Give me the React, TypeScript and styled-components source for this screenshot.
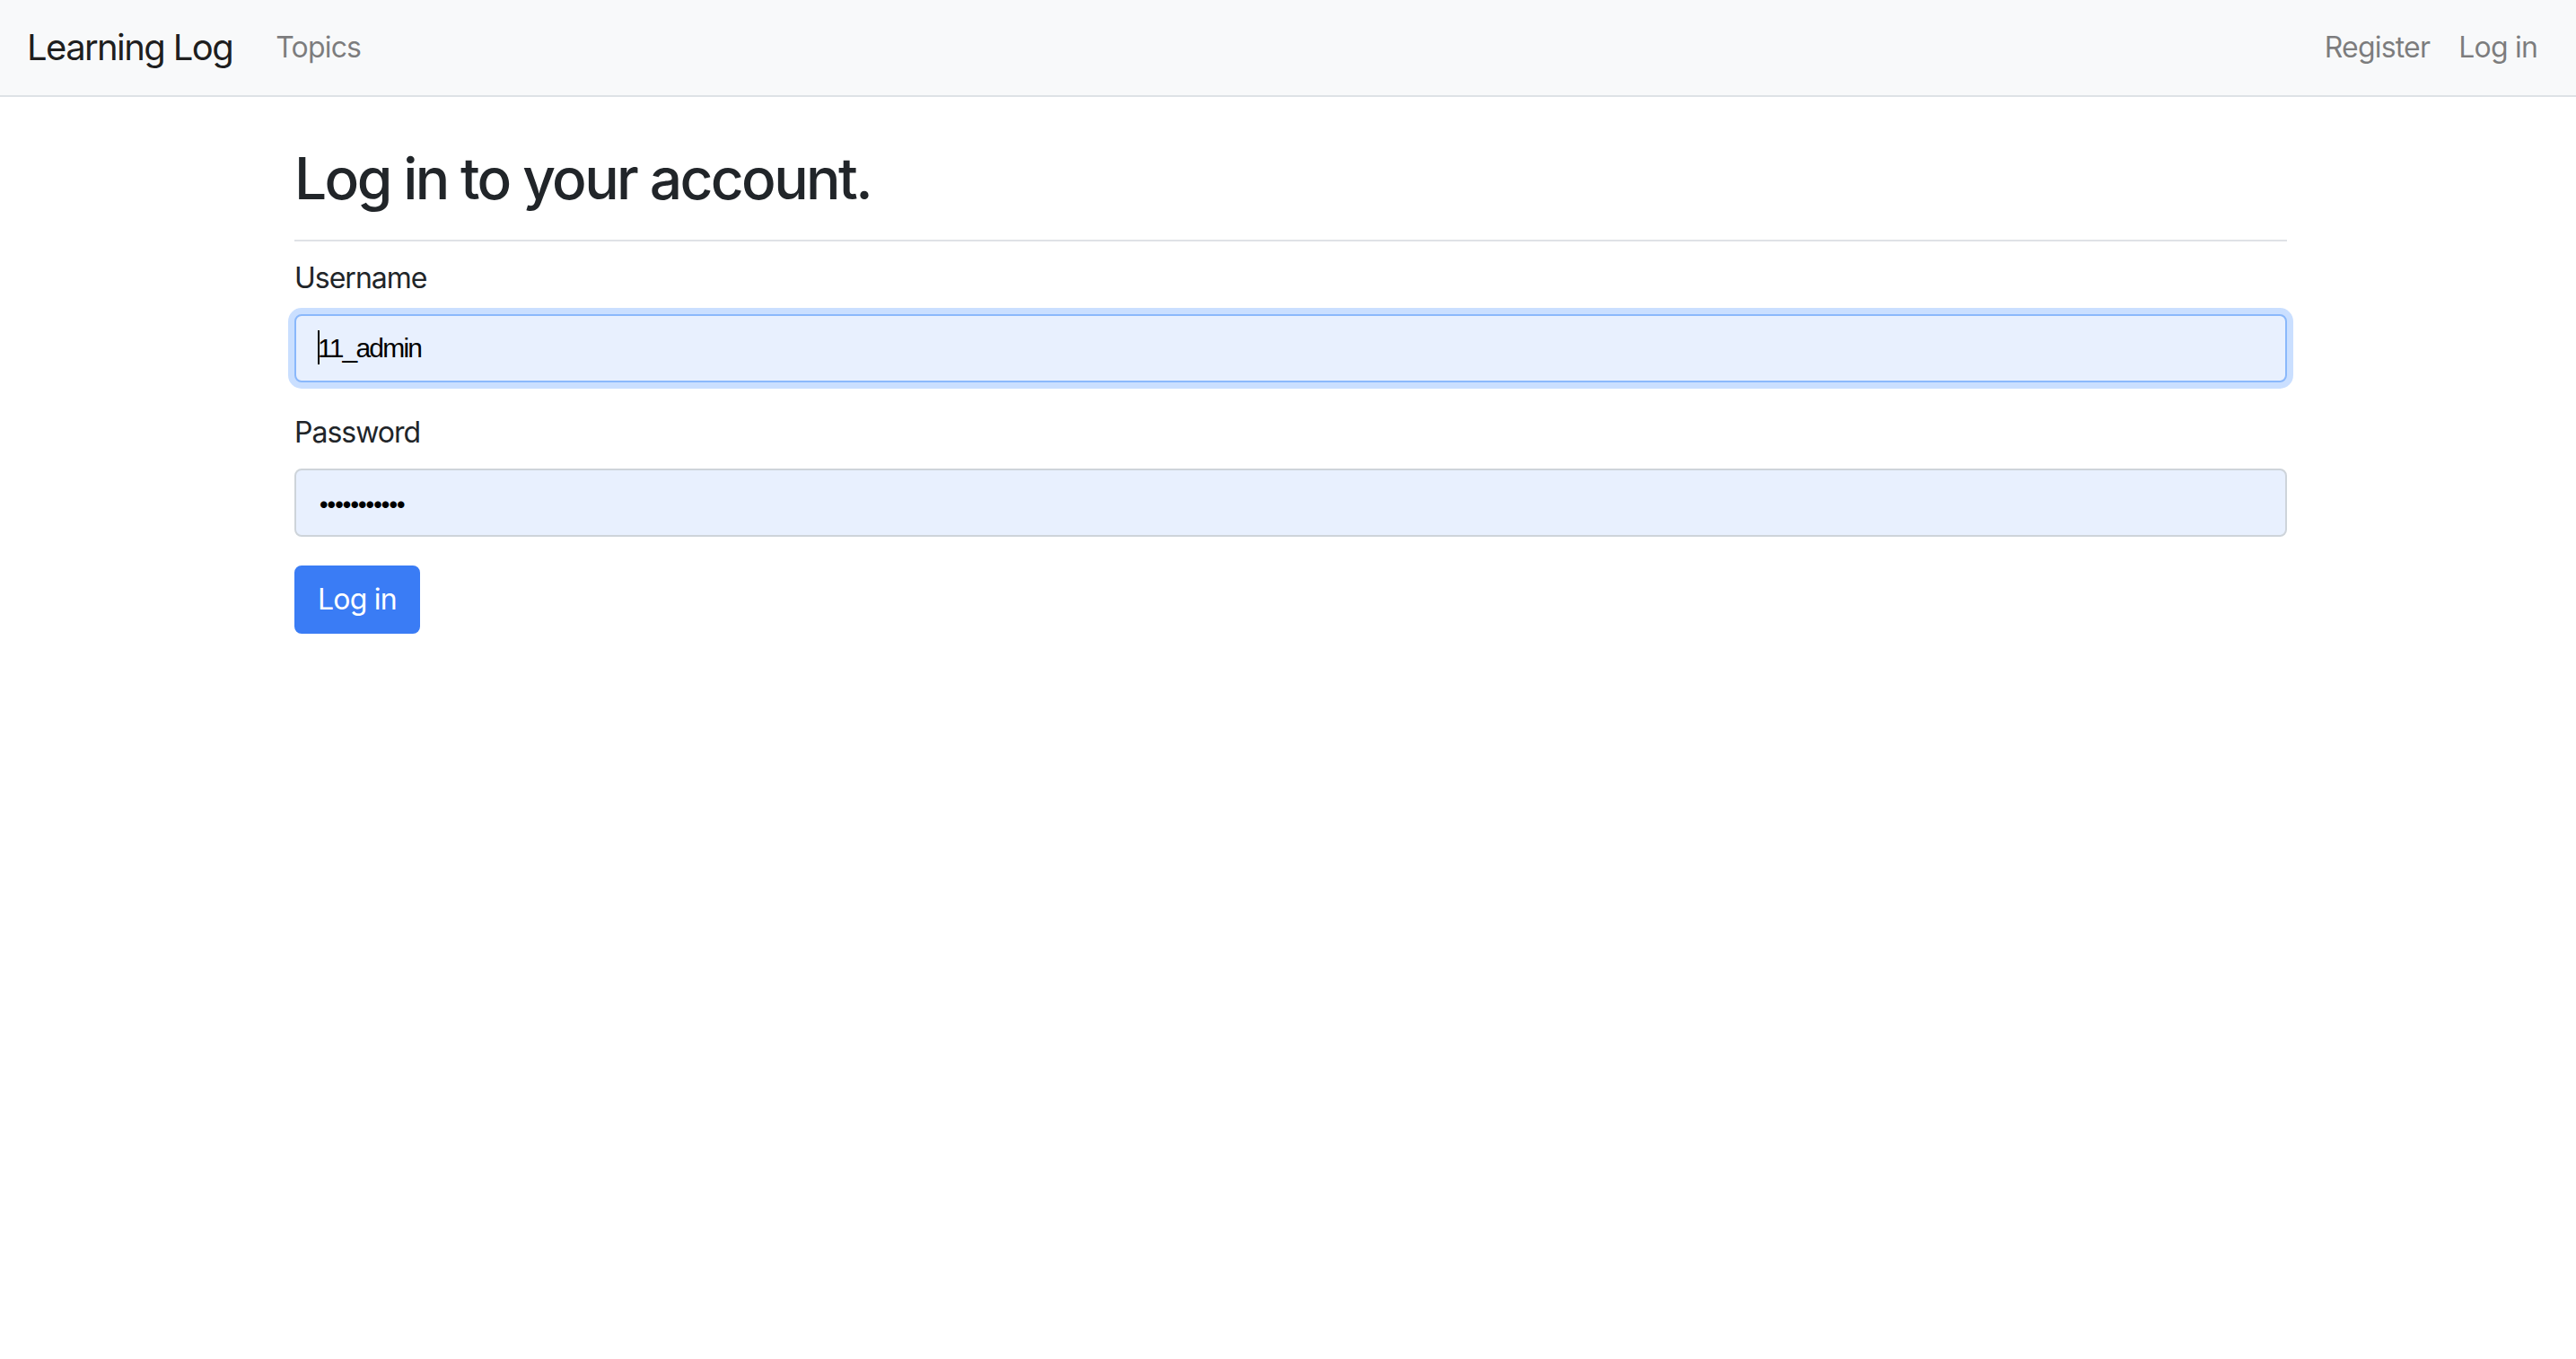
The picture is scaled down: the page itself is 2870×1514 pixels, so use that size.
import styled, { createGlobalStyle } from "styled-components";

const GlobalStyle = createGlobalStyle`
  html, body {
    margin: 0;
    padding: 0;
    background: #ffffff;
  }
  body {
    font-family: Inter, "Liberation Sans", sans-serif;
    color: #212529;
  }
  * {
    box-sizing: border-box;
  }
`;

const Navbar = styled.nav`
  display: flex;
  align-items: center;
  height: 108px;
  padding: 0 27px 0 30px;
  background: #f8f9fa;
  border-bottom: 2px solid #dee2e6;
`;

const Brand = styled.a`
  font-size: 40px;
  line-height: 60px;
  letter-spacing: -1.6px;
  color: rgba(0, 0, 0, 0.9);
  text-decoration: none;
  margin-right: 32px;
`;

const NavList = styled.ul<{ $right?: boolean }>`
  display: flex;
  list-style: none;
  margin: 0;
  margin-left: ${(p) => (p.$right ? "auto" : "0")};
  padding: 0;
`;

const NavLink = styled.a`
  display: block;
  padding: 0 16px;
  font-size: 32px;
  line-height: 48px;
  letter-spacing: -0.8px;
  color: rgba(0, 0, 0, 0.5);
  text-decoration: none;
`;

const Shell = styled.div`
  padding-left: 6px;
`;

const Container = styled.main`
  width: 2220px;
  margin: 0 auto;
`;

const Title = styled.h2`
  margin: 52px 0 30px;
  font-size: 64px;
  line-height: 77px;
  font-weight: 500;
  letter-spacing: -2.6px;
  color: #212529;
`;

const Divider = styled.hr`
  margin: 0 0 17px;
  border: 0;
  border-top: 2px solid #dfe2e6;
`;

const FormGroup = styled.div`
  margin-bottom: 32px;
`;

const Label = styled.label`
  display: block;
  margin-bottom: 16px;
  font-size: 32px;
  line-height: 48px;
  letter-spacing: -1px;
  color: #212529;
`;

const Field = styled.div`
  position: relative;
`;

const Caret = styled.span`
  position: absolute;
  left: 26px;
  top: 18px;
  width: 2px;
  height: 38px;
  background: #000;
`;

const Input = styled.input<{ $focused?: boolean; $secret?: boolean }>`
  display: block;
  width: 100%;
  height: 76px;
  padding: 12px 24px;
  font-family: ${(p) => (p.$secret ? "Inter, sans-serif" : '"Liberation Sans", Arial, sans-serif')};
  font-size: ${(p) => (p.$secret ? "24px" : "30px")};
  letter-spacing: ${(p) => (p.$secret ? "-4.9px" : "-1.8px")};
  line-height: 48px;
  color: #000;
  background: #e8f0fe;
  border: 2px solid ${(p) => (p.$focused ? "#8ab8fb" : "#ced4da")};
  border-radius: 8px;
  outline: none;
  box-shadow: ${(p) => (p.$focused ? "0 0 0 7px rgba(13, 110, 253, 0.22)" : "none")};
`;

const Button = styled.button`
  display: inline-block;
  padding: 12px 24px;
  font-family: inherit;
  font-size: 32px;
  line-height: 48px;
  letter-spacing: -0.8px;
  color: #fff;
  background: #3a7cf5;
  border: 2px solid #3a7cf5;
  border-radius: 8px;
  cursor: pointer;
`;

export default function App() {
  return (
    <>
      <GlobalStyle />
      <Navbar>
        <Brand href="#">Learning Log</Brand>
        <NavList>
          <li>
            <NavLink href="#">Topics</NavLink>
          </li>
        </NavList>
        <NavList $right>
          <li>
            <NavLink href="#">Register</NavLink>
          </li>
          <li>
            <NavLink href="#">Log in</NavLink>
          </li>
        </NavList>
      </Navbar>
      <Shell>
        <Container>
          <Title>Log in to your account.</Title>
          <Divider />
          <form onSubmit={(e) => e.preventDefault()}>
            <FormGroup>
              <Label htmlFor="id_username">Username</Label>
              <Field>
                <Input id="id_username" type="text" defaultValue="11_admin" $focused />
                <Caret />
              </Field>
            </FormGroup>
            <FormGroup>
              <Label htmlFor="id_password">Password</Label>
              <Input id="id_password" type="password" defaultValue="abcdefghijk" $secret />
            </FormGroup>
            <Button type="submit">Log in</Button>
          </form>
        </Container>
      </Shell>
    </>
  );
}
